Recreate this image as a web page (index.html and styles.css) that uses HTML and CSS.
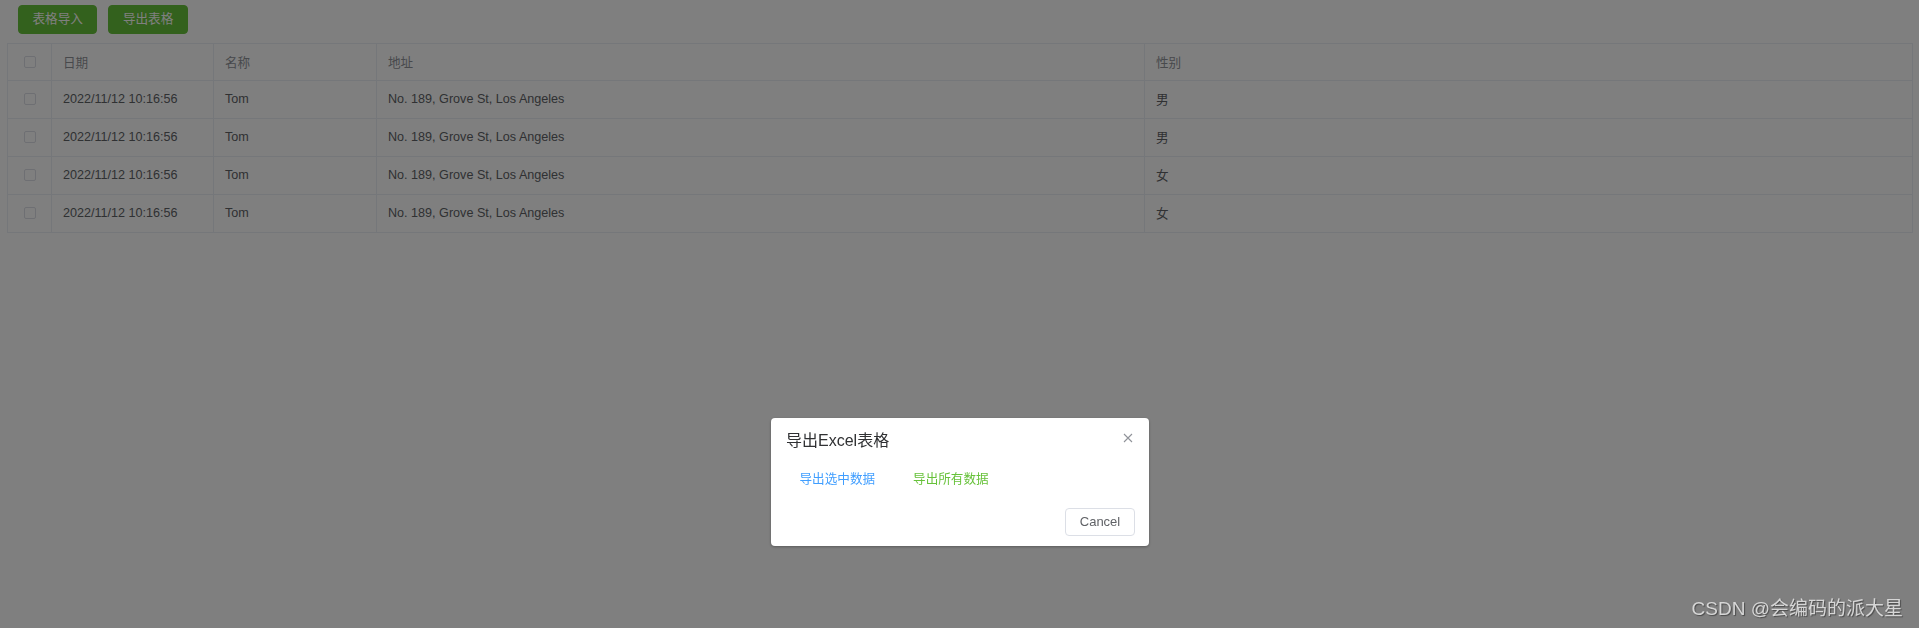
FILE: index.html
```html
<!DOCTYPE html>
<html lang="zh-CN">
<head>
<meta charset="utf-8">
<title>导出Excel表格</title>
<link rel="stylesheet" href="styles.css">
</head>
<body>
<div class="page">
  <div class="toolbar">
    <button class="btn btn-success">表格导入</button>
    <button class="btn btn-success">导出表格</button>
  </div>
  <div class="table">
    <div class="row head">
      <div class="cell sel"><span class="checkbox"></span></div>
      <div class="cell">日期</div>
      <div class="cell">名称</div>
      <div class="cell">地址</div>
      <div class="cell">性别</div>
    </div>
    <div class="row">
      <div class="cell sel"><span class="checkbox"></span></div>
      <div class="cell">2022/11/12 10:16:56</div>
      <div class="cell">Tom</div>
      <div class="cell">No. 189, Grove St, Los Angeles</div>
      <div class="cell">男</div>
    </div>
    <div class="row">
      <div class="cell sel"><span class="checkbox"></span></div>
      <div class="cell">2022/11/12 10:16:56</div>
      <div class="cell">Tom</div>
      <div class="cell">No. 189, Grove St, Los Angeles</div>
      <div class="cell">男</div>
    </div>
    <div class="row">
      <div class="cell sel"><span class="checkbox"></span></div>
      <div class="cell">2022/11/12 10:16:56</div>
      <div class="cell">Tom</div>
      <div class="cell">No. 189, Grove St, Los Angeles</div>
      <div class="cell">女</div>
    </div>
    <div class="row">
      <div class="cell sel"><span class="checkbox"></span></div>
      <div class="cell">2022/11/12 10:16:56</div>
      <div class="cell">Tom</div>
      <div class="cell">No. 189, Grove St, Los Angeles</div>
      <div class="cell">女</div>
    </div>
  </div>
</div>

<div class="overlay"></div>

<div class="dialog">
  <div class="dialog-header">
    <span class="dialog-title">导出Excel表格</span>
    <span class="dialog-close">
      <svg width="10" height="10" viewBox="0 0 10 10"><path d="M1 1L9 9M9 1L1 9" stroke="#909399" stroke-width="1.1" fill="none"/></svg>
    </span>
  </div>
  <div class="dialog-body">
    <button class="link link-primary">导出选中数据</button>
    <button class="link link-success">导出所有数据</button>
  </div>
  <div class="dialog-footer">
    <button class="btn btn-default">Cancel</button>
  </div>
</div>

<div class="watermark">CSDN @会编码的派大星</div>
</body>
</html>
```

FILE: styles.css
```css
* { box-sizing: border-box; }

html, body {
  margin: 0;
  padding: 0;
  background: #ffffff;
  width: 1919px;
  height: 628px;
  overflow: hidden;
}

body {
  font-family: "Liberation Sans", "Noto Sans CJK SC", sans-serif;
  font-size: 12.6px;
  color: #606266;
}

.page {
  padding: 5px 6px 0 7px;
}

.toolbar {
  display: flex;
  gap: 11px;
  padding-left: 11px;
  margin-bottom: 9px;
}

.btn {
  font-family: "Liberation Sans", "Noto Sans CJK SC", sans-serif;
  font-size: 12.6px;
  height: 29px;
  padding: 0 13.5px;
  border-radius: 4px;
  cursor: pointer;
  line-height: 1;
}

.btn-success {
  background: #67c23a;
  border: 1px solid #67c23a;
  color: #ffffff;
}

.btn-default {
  background: #ffffff;
  border: 1px solid #dcdfe6;
  color: #606266;
  height: 28px;
  width: 70px;
  padding: 0 0 1px;
  font-size: 13px;
}

.table {
  width: 1906px;
  border-top: 1px solid #ebeef5;
  border-left: 1px solid #ebeef5;
}

.row {
  display: grid;
  grid-template-columns: 44px 162px 163px 1fr 1fr;
  height: 38px;
}

.row.head {
  height: 37px;
  color: #909399;
}

.cell {
  border-right: 1px solid #ebeef5;
  border-bottom: 1px solid #ebeef5;
  padding: 0 11px 2px;
  display: flex;
  align-items: center;
  white-space: nowrap;
}

.cell.sel {
  justify-content: center;
  padding: 0 0 1px;
}

.checkbox {
  display: block;
  width: 12px;
  height: 12px;
  border: 1px solid #dcdfe6;
  border-radius: 2px;
  background: #ffffff;
}

.overlay {
  position: fixed;
  inset: 0;
  background: rgba(0, 0, 0, 0.5);
}

.dialog {
  position: fixed;
  top: 418px;
  left: 771px;
  width: 378px;
  height: 128px;
  background: #ffffff;
  border-radius: 4px;
  box-shadow: 0 1px 3px rgba(0, 0, 0, 0.3);
  padding: 12px 14px 9px 15px;
  display: flex;
  flex-direction: column;
}

.dialog-header {
  display: flex;
  justify-content: space-between;
  align-items: flex-start;
  height: 22px;
}

.dialog-title {
  font-size: 16px;
  line-height: 22px;
  color: #303133;
}

.dialog-close {
  display: flex;
  margin-top: 3px;
  margin-right: 2px;
}

.dialog-body {
  margin-top: 11px;
  display: flex;
  gap: 11px;
  height: 28px;
}

.link {
  font-family: "Liberation Sans", "Noto Sans CJK SC", sans-serif;
  font-size: 12.6px;
  background: transparent;
  border: none;
  padding: 0 13.5px;
  height: 28px;
  cursor: pointer;
}

.link-primary { color: #409eff; }
.link-success { color: #67c23a; }

.dialog-footer {
  margin-top: 17px;
  display: flex;
  justify-content: flex-end;
}

.watermark {
  position: fixed;
  right: 16px;
  bottom: 8px;
  font-family: "Liberation Sans", "Noto Sans CJK SC", sans-serif;
  font-size: 19px;
  line-height: 22px;
  color: #d6d6d6;
  text-shadow: 1px 1px 1px #4a4a4a;
}
```
